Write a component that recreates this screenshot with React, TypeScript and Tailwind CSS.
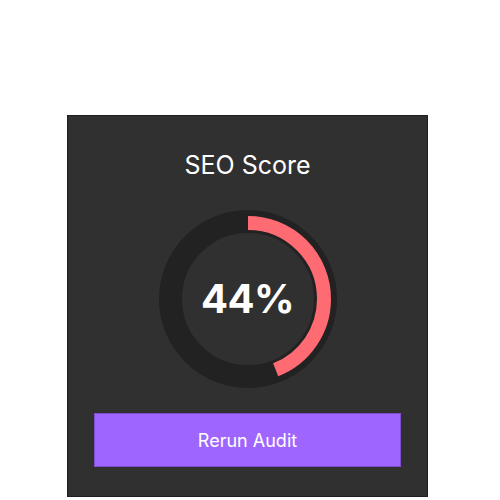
import React from "react";

const score = 44;

function ScoreRing({ value }: { value: number }) {
  const r = 76;
  const c = 2 * Math.PI * r;
  const dash = (value / 100) * c;
  return (
    <div className="relative w-[178px] h-[178px]">
      <svg width="178" height="178" viewBox="0 0 178 178">
        <circle cx="89" cy="89" r="77.5" fill="none" stroke="#222222" strokeWidth="23" />
        <circle
          cx="89"
          cy="89"
          r={r}
          fill="none"
          stroke="#ff6b72"
          strokeWidth="14"
          strokeDasharray={`${dash} ${c}`}
          transform="rotate(-90 89 89)"
        />
      </svg>
      <div className="absolute inset-0 flex items-center justify-center">
        <span className="text-[40px] font-bold text-white tracking-[-0.5px]">{value}%</span>
      </div>
    </div>
  );
}

export default function App() {
  return (
    <div className="w-[500px] h-[500px] bg-white overflow-hidden font-['Inter',sans-serif]">
      <div className="ml-[67px] mt-[115px] w-[361px] h-[382px] bg-[#303030] border border-[#1f1f1f] flex flex-col items-center">
        <h2 className="mt-[34px] text-[25px] leading-[31px] text-white">SEO Score</h2>
        <div className="mt-[29px]">
          <ScoreRing value={score} />
        </div>
        <button className="mt-[25px] w-[307px] h-[54px] bg-[#9f66ff] border border-[#7d4fd0] text-white text-[18px]">
          Rerun Audit
        </button>
      </div>
    </div>
  );
}
